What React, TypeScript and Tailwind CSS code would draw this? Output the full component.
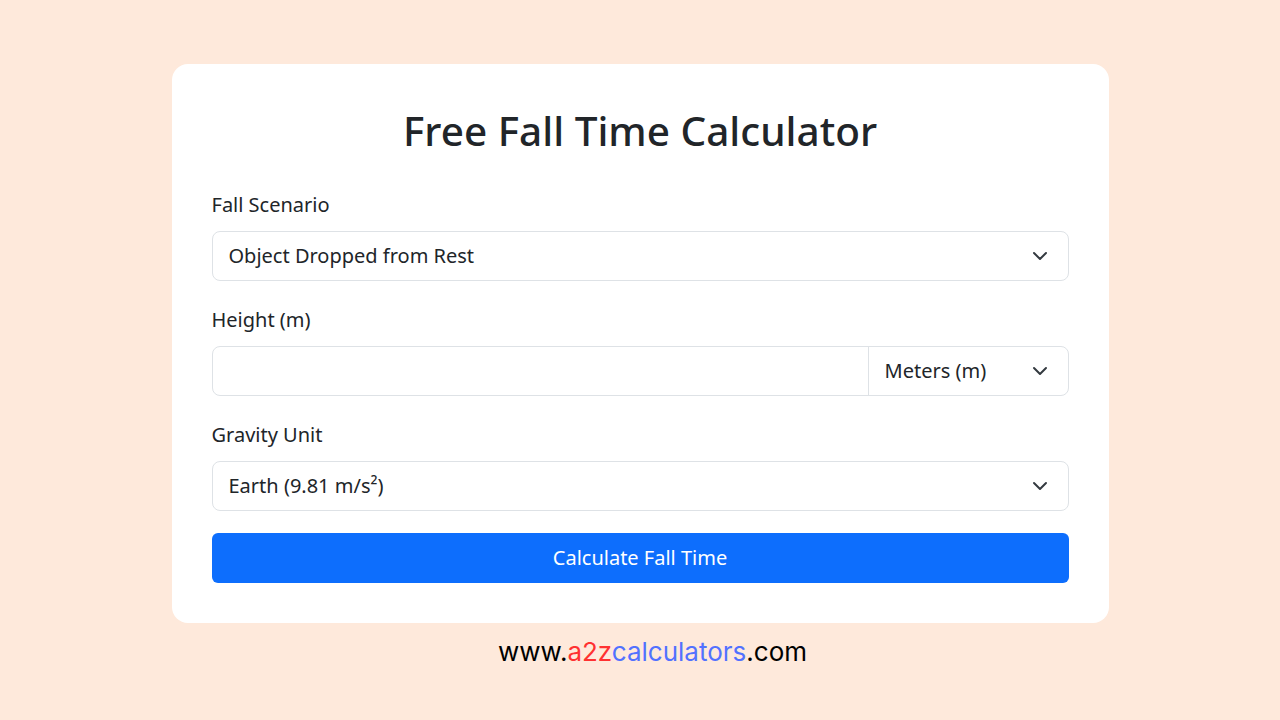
import React from 'react';

const Chevron: React.FC = () => (
  <svg width="20" height="16" viewBox="0 0 16 16" fill="none" className="shrink-0">
    <path d="m2 5 6 6 6-6" stroke="#343a40" strokeWidth="2" strokeLinecap="round" strokeLinejoin="round" />
  </svg>
);

const SelectBox: React.FC<{ value: string }> = ({ value }) => (
  <div className="flex h-[50px] items-center justify-between rounded-[8px] border border-[#dee2e6] bg-white pl-[16px] pr-[18px] text-[20px] text-[#212529]">
    <span>{value}</span>
    <Chevron />
  </div>
);

const Label: React.FC<{ children: React.ReactNode }> = ({ children }) => (
  <label className="mb-[11px] block text-[20px] leading-[30px] text-[#212529]">{children}</label>
);

const App: React.FC = () => {
  return (
    <div
      className="flex min-h-[720px] flex-col items-center bg-[#fee9db] pt-[64px]"
      style={{ fontFamily: '"Noto Sans", "Open Sans", sans-serif' }}
    >
      <div className="w-[937px] rounded-[16px] bg-white px-[40px] pb-[40px] pt-[43px]">
        <h1 className="mb-[35px] text-center text-[40.5px] font-medium leading-[48px] text-[#212529]">
          Free Fall Time Calculator
        </h1>

        <div className="mb-[24px]">
          <Label>Fall Scenario</Label>
          <SelectBox value="Object Dropped from Rest" />
        </div>

        <div className="mb-[24px]">
          <Label>Height (m)</Label>
          <div className="flex h-[50px] rounded-[8px] border border-[#dee2e6] bg-white">
            <input className="min-w-0 flex-1 rounded-l-[8px] bg-transparent px-[16px] text-[20px] outline-none" />
            <div className="flex w-[200px] items-center justify-between border-l border-[#dee2e6] pl-[16px] pr-[18px] text-[20px] text-[#212529]">
              <span>Meters (m)</span>
              <Chevron />
            </div>
          </div>
        </div>

        <div className="mb-[22px]">
          <Label>Gravity Unit</Label>
          <SelectBox value="Earth (9.81 m/s²)" />
        </div>

        <button className="h-[50px] w-full rounded-[6px] bg-[#0d6efd] text-[20px] text-white">
          Calculate Fall Time
        </button>
      </div>

      <p
        className="ml-[25px] mt-[13px] text-[26px] leading-[32px] text-black"
        style={{ fontFamily: 'Inter, "Open Sans", sans-serif' }}
      >
        www.<span className="text-[#ff3131]">a2z</span>
        <span className="text-[#5271ff]">calculators</span>.com
      </p>
    </div>
  );
};

export default App;
